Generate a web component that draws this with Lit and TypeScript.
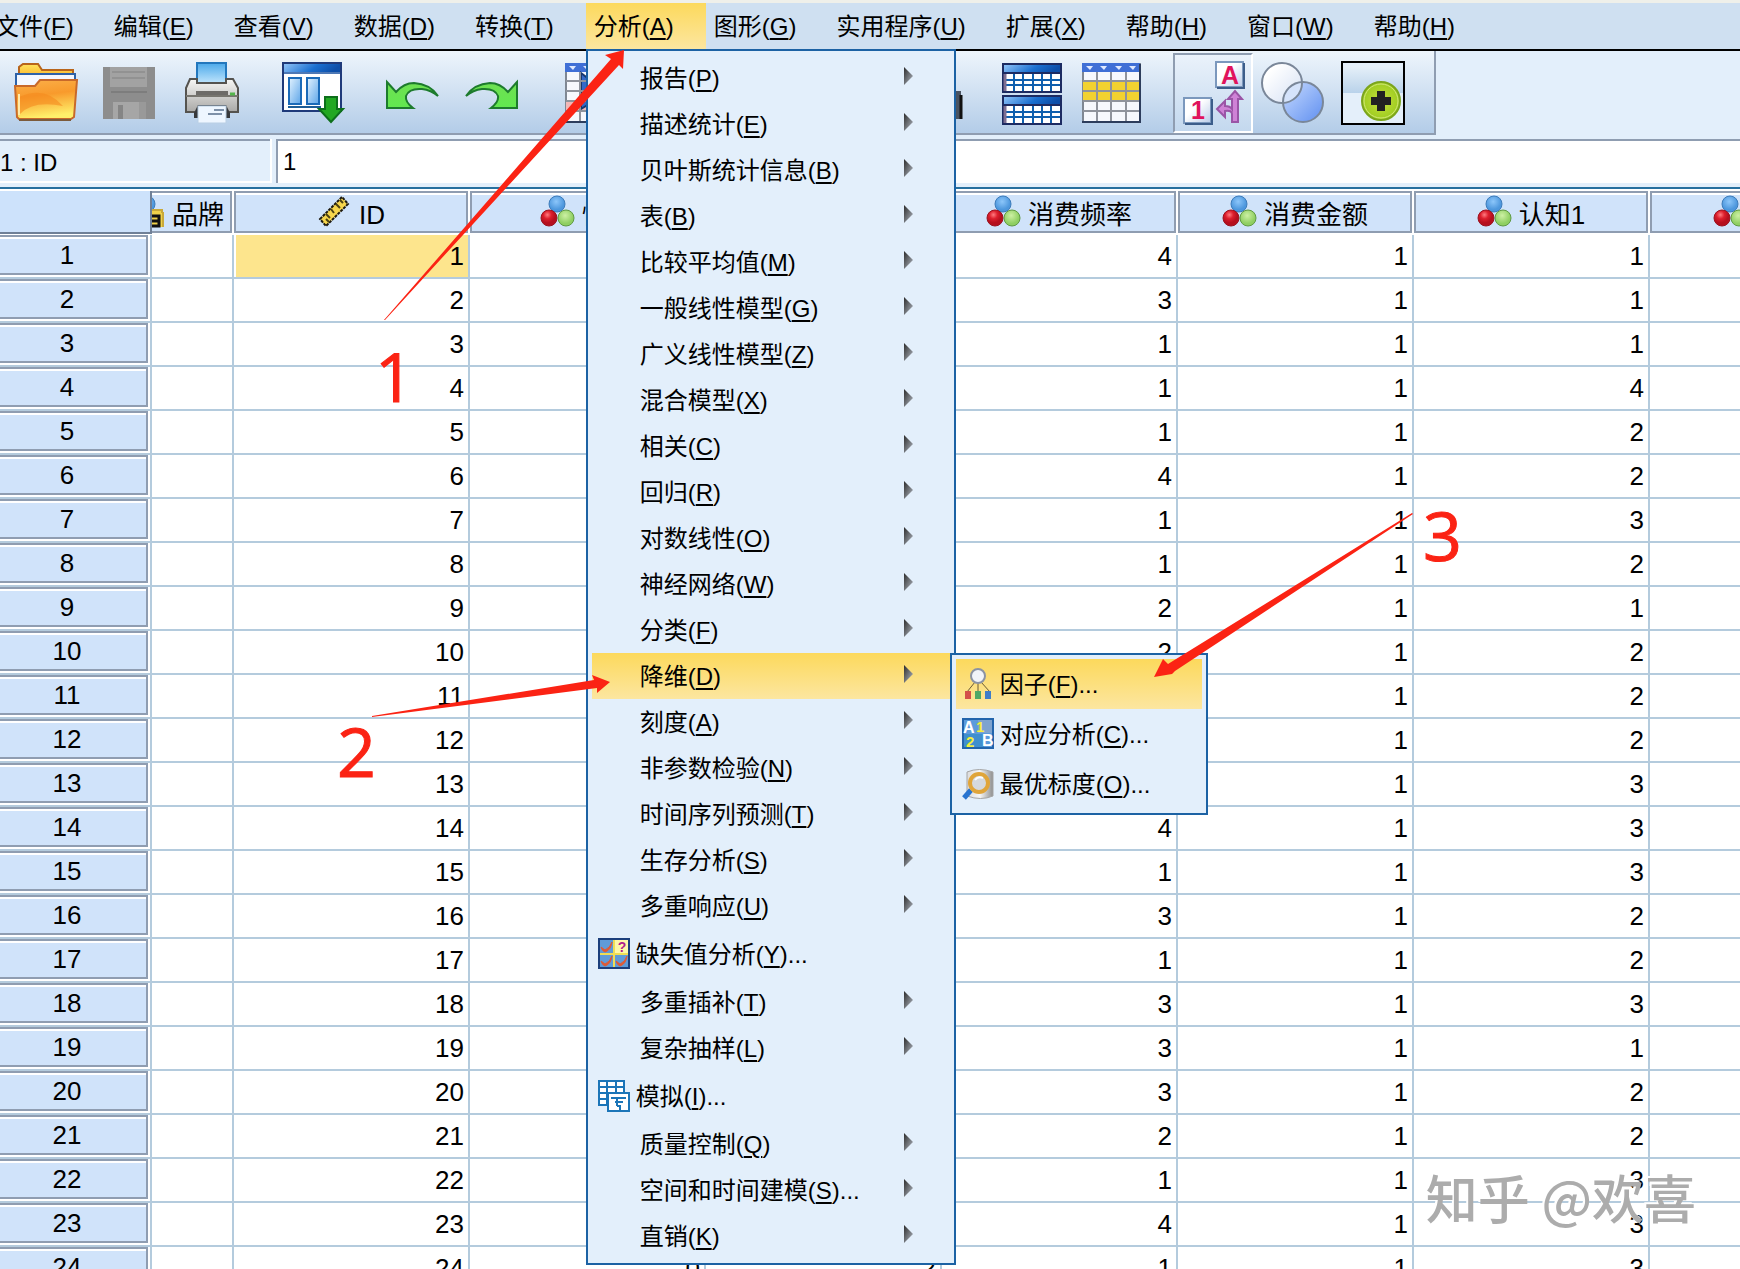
import { LitElement, html, css, svg, nothing } from "lit";
import type { TemplateResult } from "lit";
import { customElement } from "lit/decorators.js";
import { classMap } from "lit/directives/class-map.js";

type Entry = { text: string; key: string; more?: boolean; icon?: string; sub?: boolean; active?: boolean };

const MENUS: Entry[] = [
  { text: "文件", key: "F" },
  { text: "编辑", key: "E" },
  { text: "查看", key: "V" },
  { text: "数据", key: "D" },
  { text: "转换", key: "T" },
  { text: "分析", key: "A", active: true },
  { text: "图形", key: "G" },
  { text: "实用程序", key: "U" },
  { text: "扩展", key: "X" },
  { text: "帮助", key: "H" },
  { text: "窗口", key: "W" },
  { text: "帮助", key: "H" },
];

const ANALYZE: Entry[] = [
  { text: "报告", key: "P", sub: true },
  { text: "描述统计", key: "E", sub: true },
  { text: "贝叶斯统计信息", key: "B", sub: true },
  { text: "表", key: "B", sub: true },
  { text: "比较平均值", key: "M", sub: true },
  { text: "一般线性模型", key: "G", sub: true },
  { text: "广义线性模型", key: "Z", sub: true },
  { text: "混合模型", key: "X", sub: true },
  { text: "相关", key: "C", sub: true },
  { text: "回归", key: "R", sub: true },
  { text: "对数线性", key: "O", sub: true },
  { text: "神经网络", key: "W", sub: true },
  { text: "分类", key: "F", sub: true },
  { text: "降维", key: "D", sub: true, active: true },
  { text: "刻度", key: "A", sub: true },
  { text: "非参数检验", key: "N", sub: true },
  { text: "时间序列预测", key: "T", sub: true },
  { text: "生存分析", key: "S", sub: true },
  { text: "多重响应", key: "U", sub: true },
  { text: "缺失值分析", key: "Y", more: true, icon: "missing" },
  { text: "多重插补", key: "T", sub: true },
  { text: "复杂抽样", key: "L", sub: true },
  { text: "模拟", key: "I", more: true, icon: "simulate" },
  { text: "质量控制", key: "Q", sub: true },
  { text: "空间和时间建模", key: "S", more: true, sub: true },
  { text: "直销", key: "K", sub: true },
];

const REDUCTION: Entry[] = [
  { text: "因子", key: "F", more: true, icon: "factor", active: true },
  { text: "对应分析", key: "C", more: true, icon: "correspond" },
  { text: "最优标度", key: "O", more: true, icon: "scaling" },
];

const COLUMNS = [
  { name: "品牌", icon: "locked", narrow: true },
  { name: "ID", icon: "ruler" },
  { name: "性别", icon: "nominal" },
  { name: "年龄", icon: "nominal" },
  { name: "消费频率", icon: "nominal" },
  { name: "消费金额", icon: "nominal" },
  { name: "认知1", icon: "nominal" },
  { name: "认知2", icon: "nominal" },
];

const FREQUENCY = [4, 3, 1, 1, 1, 4, 1, 1, 2, 2, 3, 1, 2, 4, 1, 3, 1, 3, 3, 3, 2, 1, 4, 1];
const AWARENESS = [1, 1, 1, 4, 2, 2, 3, 2, 1, 2, 2, 2, 3, 3, 3, 2, 2, 3, 1, 2, 2, 3, 3, 3];
const ROWS = FREQUENCY.map((f, i) => ["", i + 1, 0, 2, f, 1, AWARENESS[i], ""]);

const gridLines = (x: number, y: number, w: number, h: number, cols: number, rows: number) => {
  const d: string[] = [];
  for (let c = 1; c < cols; c++) d.push(`M${x + Math.round((w * c) / cols)} ${y}v${h}`);
  for (let r = 1; r < rows; r++) d.push(`M${x} ${y + Math.round((h * r) / rows)}h${w}`);
  return d.join("");
};

const sheet = (y: number) => svg`
  <rect x="3" y=${y + 1} width="58" height="28" fill="#fff" stroke="#1c2b62" stroke-width="2"/>
  <rect x="4" y=${y + 2} width="56" height="8" fill="url(#bluebar)"/>
  <path d="M4 ${y + 10}h56" stroke="#1c2b62" stroke-width="2"/>
  <path d=${gridLines(5, y + 11, 55, 17, 6, 3)} stroke="#0e5fae" stroke-width="2"/>
  <path d="M5 ${y + 11}v17" stroke="#7d6f93" stroke-width="3"/>`;

const caseTable = (rows: TemplateResult) => svg`
  <rect x="3" y="3" width="57" height="58" fill="#f6f8fd" stroke="#7f8793" stroke-width="2"/>
  <rect x="2" y="2" width="58" height="9" fill="#3f6fd6"/>
  <path d="M6 5h7l-3 4zM20 5h7l-3 4zM35 5h7l-3 4zM49 5h7l-3 4z" fill="#dfe9ff"/>
  ${rows}
  <path d="M17 11v49M31 11v49M46 11v49M3 20h56M3 30h56M3 40h56M3 50h56" stroke="#8f939c" stroke-width="2"/>
  <path d="M60 3v58H2" fill="none" stroke="#2d3d5c" stroke-width="2"/>`;

const DEFS = svg`
  <defs>
    <linearGradient id="bluebar" x1="0" x2="1" y1="0" y2="0.2"><stop offset="0" stop-color="#8fc3f7"/><stop offset="0.6" stop-color="#1a6fd0"/><stop offset="1" stop-color="#0d4ea8"/></linearGradient>
    <linearGradient id="folder" x1="0" x2="0.2" y1="0" y2="1"><stop offset="0" stop-color="#fbb04a"/><stop offset="0.45" stop-color="#f89a2c"/><stop offset="1" stop-color="#fff06a"/></linearGradient>
    <linearGradient id="tab" x1="0" x2="0" y1="0" y2="1"><stop offset="0" stop-color="#ffe35c"/><stop offset="1" stop-color="#f9a51b"/></linearGradient>
    <linearGradient id="paper" x1="0" x2="0" y1="0" y2="1"><stop offset="0" stop-color="#4ba9ea"/><stop offset="1" stop-color="#d5efff"/></linearGradient>
    <linearGradient id="metal" x1="0" x2="0" y1="0" y2="1"><stop offset="0" stop-color="#f7f7f5"/><stop offset="1" stop-color="#a9a8a6"/></linearGradient>
    <linearGradient id="pane" x1="0" x2="1" y1="0" y2="1"><stop offset="0" stop-color="#e3f3ff"/><stop offset="1" stop-color="#5ba4e8"/></linearGradient>
    <linearGradient id="green" x1="0" x2="0" y1="0" y2="1"><stop offset="0" stop-color="#6fe052"/><stop offset="1" stop-color="#62e850"/></linearGradient>
    <linearGradient id="tile" x1="0" x2="1" y1="0" y2="1"><stop offset="0.4" stop-color="#ffffff"/><stop offset="1" stop-color="#b8cbe8"/></linearGradient>
    <linearGradient id="venn" x1="0" x2="1" y1="0" y2="1"><stop offset="0" stop-color="#c9dcff"/><stop offset="1" stop-color="#5f8ff0"/></linearGradient>
    <linearGradient id="clear" x1="0" x2="1" y1="0" y2="1"><stop offset="0.2" stop-color="#ffffff"/><stop offset="1" stop-color="#d4e0f4"/></linearGradient>
    <linearGradient id="sky" x1="0" x2="0" y1="0" y2="1"><stop offset="0" stop-color="#e6f0f9"/><stop offset="1" stop-color="#b9d2ea"/></linearGradient>
    <radialGradient id="lime"><stop offset="0.4" stop-color="#b6d832"/><stop offset="1" stop-color="#9ccb1e"/></radialGradient>
    <radialGradient id="ballb" cx="0.45" cy="0.35"><stop offset="0" stop-color="#8cc6fa"/><stop offset="1" stop-color="#4d97dd"/></radialGradient>
    <radialGradient id="ballr" cx="0.4" cy="0.3"><stop offset="0" stop-color="#ff7b80"/><stop offset="0.5" stop-color="#dd1f2d"/><stop offset="1" stop-color="#b50f1e"/></radialGradient>
    <radialGradient id="ballg" cx="0.45" cy="0.35"><stop offset="0" stop-color="#cdf0a4"/><stop offset="1" stop-color="#8fcf62"/></radialGradient>
    <linearGradient id="drum" x1="0" x2="1" y1="0" y2="0"><stop offset="0" stop-color="#dcdcdc"/><stop offset="0.5" stop-color="#f6f6f6"/><stop offset="1" stop-color="#8f8f8f"/></linearGradient>
    <linearGradient id="arrow" x1="0" x2="1" y1="0" y2="1"><stop offset="0" stop-color="#2b2b2b"/><stop offset="1" stop-color="#b5bcc6"/></linearGradient>
  </defs>`;

const UNDO = "M5 21l9 10q8-9 18-9 16 1 24 13-7-6-16-7-13-1-16 7-1 6 7 12H5z";

const TOOLS: Record<string, TemplateResult> = {
  open: svg`
    <path d="M5 14v-8l4-3h15l4 6h31v12H5z" fill="url(#tab)" stroke="#b8651b" stroke-width="2"/>
    <path d="M2 13h59v12H2z" fill="#f4f8ff" stroke="#2e62a8" stroke-width="2"/>
    <path d="M1 25h20l5-6h37l-3 37-3 2H5l-2-2z" fill="url(#folder)" stroke="#c8692a" stroke-width="2"/>
    <path d="M5 36q26-12 44 9-30-6-43 8z" fill="#f58a1e" opacity="0.6"/>
    <path d="M5 54V33" stroke="#ffe9a8" stroke-width="2"/>
    <path d="M5 59h52" stroke="#7c5b3c" stroke-width="2"/>`,
  save: svg`
    <path d="M6 6h52v52H6z" fill="#8d8d8d"/>
    <path d="M13 6h37v20H13z" fill="#a2a2a2"/>
    <path d="M15 11h33M15 17h33" stroke="#929292" stroke-width="2"/>
    <path d="M14 31h36" stroke="#7d7d7d" stroke-width="2"/>
    <path d="M16 58V41h26v17z" fill="#a6a6a6"/><path d="M21 44h5v14h-5z" fill="#858585"/><path d="M42 41h7v17h-7z" fill="#999"/>`,
  print: svg`
    <path d="M14 26v-7h36v7" fill="#2f3740"/>
    <path d="M17 2h29v24H17z" fill="url(#paper)" stroke="#2277bd" stroke-width="2"/>
    <path d="M10 18h7v4h29v-4h7l5 9v24H6V27z" fill="url(#metal)" stroke="#55534f" stroke-width="2"/>
    <path d="M6 35h52" stroke="#77756f" stroke-width="2"/><path d="M16 32h32" stroke="#6d6b68" stroke-width="4"/>
    <path d="M50 33h5" stroke="#55b54c" stroke-width="3"/>
    <path d="M14 52l4-8h28l4 8v5H14z" fill="#37393c"/>
    <path d="M18 45h28v17H18z" fill="#eef6ff" stroke="#b9cfe4"/><path d="M28 53h14M34 49h10" stroke="#7d90a8" stroke-width="2"/>`,
  recall: svg`
    <rect x="2" y="2" width="58" height="48" fill="#fff" stroke="#1f3a7a" stroke-width="2"/>
    <rect x="3" y="3" width="56" height="9" fill="url(#bluebar)"/><path d="M3 12h56" stroke="#4d78b5" stroke-width="2"/>
    <rect x="8" y="17" width="12" height="26" fill="url(#pane)" stroke="#1a6ab8" stroke-width="2"/>
    <rect x="26" y="17" width="12" height="26" fill="url(#pane)" stroke="#1a6ab8" stroke-width="2"/>
    <path d="M7 46h33" stroke="#1c5d97" stroke-width="2"/>
    <path d="M44 36h12v12h6L50 61 38 48h6z" fill="#22a822" stroke="#0d6f1b" stroke-width="2"/>`,
  undo: svg`<path d=${UNDO} fill="url(#green)" stroke="#1d7b2d" stroke-width="2"/>`,
  redo: svg`<path d=${UNDO} transform="matrix(-1 0 0 1 60 0)" fill="url(#green)" stroke="#1d7b2d" stroke-width="2"/>`,
  goto: caseTable(svg`<path d="M3 41h56v9H3z" fill="#f2b7b7"/><path d="M18 12l26 20-26 16z" fill="#3468c8" stroke="#17376e" stroke-width="2"/>`),
  find: svg`<path d="M6 30h56v28H6z" fill="#4a5361"/><path d="M62 34v24" stroke="#111" stroke-width="3"/>`,
  split: svg`${sheet(2)}${sheet(34)}`,
  select: caseTable(svg`<path d="M3 21h56v19H3z" fill="#f2d230"/>`),
  labels: svg`
    <rect x="35" y="1" width="27" height="25" fill="url(#tile)" stroke="#7b98bd" stroke-width="2"/><path d="M36 27h27V2" fill="none" stroke="#3c5d8a" stroke-width="2"/>
    <text x="49" y="23" text-anchor="middle" class="glyph">A</text>
    <rect x="3" y="37" width="27" height="25" fill="url(#tile)" stroke="#7b98bd" stroke-width="2"/><path d="M4 63h27V38" fill="none" stroke="#3c5d8a" stroke-width="2"/>
    <text x="17" y="58" text-anchor="middle" class="glyph">1</text>
    <path d="M51 61V53q0-4-7-3v6l-8-8 8-8v5q5 0 7 3V38h-4l7-8 7 8h-4v23z" fill="#cf82d6" stroke="#9a55a6" stroke-width="2"/>`,
  venn: svg`
    <circle cx="21" cy="22" r="20" fill="url(#clear)"/><circle cx="42" cy="41" r="20" fill="url(#venn)"/>
    <path d="M22 42A20 20 0 0 1 41 21A20 20 0 0 1 22 42z" fill="#d5e3fb"/>
    <g fill="none" stroke="#7a8799" stroke-width="2"><circle cx="21" cy="22" r="20"/><circle cx="42" cy="41" r="20"/></g>`,
  custom: svg`
    <rect x="1" y="1" width="62" height="62" fill="#e4effa" stroke="#000" stroke-width="2"/>
    <path d="M2 5h60v27H2z" fill="url(#sky)"/>
    <circle cx="40" cy="40" r="19" fill="url(#lime)" stroke="#7ca51c" stroke-width="2"/><circle cx="40" cy="40" r="17" fill="none" stroke="#d3e87a" stroke-width="1"/>
    <path d="M36 30h8v6h6v8h-6v6h-8v-6h-6v-8h6z" fill="#222"/>`,
};

const TOOL_GROUPS: { ids: [string, string][]; gap: string }[] = [
  { ids: [["open", "打开"], ["save", "保存"], ["print", "打印"]], gap: "g3" },
  { ids: [["recall", "重新调用对话框"]], gap: "" },
  { ids: [["undo", "撤消"], ["redo", "重做"]], gap: "" },
  { ids: [["goto", "转到个案"], ["goto", "转到变量"], ["select", "变量"], ["select", "描述"], ["find", "查找"]], gap: "g4" },
  { ids: [["split", "拆分文件"], ["select", "选择个案"]], gap: "" },
  { ids: [["labels", "值标签"], ["venn", "使用变量集"], ["custom", "定制工具栏"]], gap: "" },
];

const BALLS = svg`
  <g stroke-width="1">
    <circle cx="17" cy="8" r="8" fill="url(#ballb)" stroke="#3d7cba"/>
    <circle cx="9" cy="22" r="8" fill="url(#ballr)" stroke="#9b1320"/>
    <circle cx="26" cy="22" r="8" fill="url(#ballg)" stroke="#5f9a43"/>
  </g>`;

const SMALL: Record<string, TemplateResult> = {
  nominal: BALLS,
  locked: svg`<circle cx="17" cy="8" r="8" fill="url(#ballb)" stroke="#3d7cba"/><rect x="17" y="14" width="16" height="17" fill="#f0d24a"/><path d="M18 14h14v3M33 16v15" fill="none" stroke="#c9a93a" stroke-width="2"/><path d="M21 20h8v10h-9v-5h9" fill="none" stroke="#111" stroke-width="3"/>`,
  ruler: svg`<path d="M3 23L25 1l6 7L9 30z" fill="#f7d64c" stroke="#1d1a10" stroke-width="2" stroke-dasharray="3 1"/><path d="M9 18l4 4M14 13l3 4M19 8l4 4M23 4l3 3M12 26l-3-3" stroke="#4d4212" stroke-width="2"/>`,
  missing: svg`
    <rect x="1" y="1" width="30" height="29" fill="#5f9bd8" stroke="#1c3f7c" stroke-width="2"/>
    <path d="M17 2h13v14H17z" fill="#fdf7a8"/><path d="M2 16h28M16 2v27" stroke="#f0dd55" stroke-width="2"/>
    <path d="M3 9l4 3q5-2 7-8-1 8-7 10-3-1-4-5zM3 23l4 3q5-2 7-8-1 8-7 10-3-1-4-5zM18 23l4 3q5-2 7-8-1 8-7 10-3-1-4-5z" fill="#e05a35" stroke="#e05a35"/>
    <text x="24" y="14" text-anchor="middle" class="mark">?</text>`,
  simulate: svg`
    <path d="M1 1h25v24H1z" fill="#fff" stroke="#1b75b8" stroke-width="2"/>
    <path d="M9 1v24M18 1v24M1 7h25M1 13h25M1 19h25" stroke="#1b75b8" stroke-width="2"/>
    <path d="M10 13h21v18H10z" fill="#fff" stroke="#1b75b8" stroke-width="2"/>
    <path d="M13 18h15M17 22h8M19 26h3v4M19 18v8" stroke="#1b75b8" stroke-width="2" fill="none"/>`,
  factor: svg`
    <path d="M16 14v10M13 14L5 24M19 14l9 10" stroke="#6b5a34" stroke-width="1" fill="none"/>
    <circle cx="16" cy="8" r="7" fill="#f1f4f9" stroke="#8b93a3" stroke-width="2"/>
    <path d="M3 23h6v8H3z" fill="#d3504a"/><path d="M13 23h6v8h-6z" fill="#4fa866"/><path d="M23 23h6v8h-6z" fill="#3e7dc9"/>`,
  correspond: svg`
    <rect x="1" y="1" width="30" height="29" fill="#5b9bdc" stroke="#2264ac" stroke-width="2"/><path d="M16 2h14v13H16z" fill="#7ea3cf"/><path d="M2 16h20v13H2z" fill="#3f8fce"/>
    <text x="1" y="15" class="lt">A</text><text x="14" y="14" class="yw">1</text><text x="4" y="29" class="yw">2</text><text x="20" y="28" class="lt">B</text>`,
  scaling: svg`
    <path d="M5 4q12-5 26 0v24q-12 5-26 0z" fill="url(#drum)" stroke="#a5a5a5"/>
    <path d="M9 22l-7 8" stroke="#2874d0" stroke-width="5"/>
    <circle cx="17" cy="15" r="9" fill="#d5d9de" stroke="#e0a53a" stroke-width="4"/><path d="M13 12q3-4 8-2" stroke="#fff" stroke-width="2" fill="none"/>`,
};

const small = (id: string, width = 34) =>
  html`<svg class="small" viewBox="0 0 ${width} 32" width=${width} height="32" aria-hidden="true">${SMALL[id]}</svg>`;
const label = (e: Entry) => html`<span>${e.text}(<u>${e.key}</u>)${e.more ? "..." : ""}</span>`;

@customElement("app-root")
export class AppRoot extends LitElement {
  static styles = css`
    :host {
      display: block;
      font-family: "Liberation Sans", "Noto Sans CJK SC", sans-serif;
      font-size: 24px;
      line-height: 32px;
      color: #000;
    }
    * { box-sizing: border-box; }
    button, input { font: inherit; color: inherit; border: 0; margin: 0; padding: 0; background: none; border-radius: 0; }
    .defs { position: absolute; width: 0; height: 0; }
    .shell { position: relative; display: flex; flex-direction: column; height: 100vh; overflow: hidden; background: #e3effb; }

    .menubar { display: flex; border-top: 3px solid #eff0ea; border-bottom: 2px solid #000; background: #cfe0f1; padding: 0; }
    .menubar ul, .menu { list-style: none; margin: 0; padding: 0; }
    .bar { display: flex; }
    .bar > li { position: relative; flex: none; }
    .bar > li:first-child { margin-left: -13px; }
    .top { display: block; height: 46px; padding: 2px 32px 0 8px; white-space: nowrap; }
    .hot { background: linear-gradient(#fcd95c, #fce6a0); }
    u { text-underline-offset: 3px; text-decoration-thickness: 2px; }

    .bar .menu { position: absolute; z-index: 2; background: #e3effb; border: 2px solid #1c62a4; padding: 4px; }
    .drop { left: 0; top: 46px; width: 370px; }
    .bar .drop { padding-right: 0; }
    .menu li { position: relative; }
    .item { display: flex; align-items: center; width: 100%; height: 46px; padding-left: 48px; padding-right: 40px; text-align: left; white-space: nowrap; }
    .item span { flex: 1; padding-top: 2px; }
    .item.pic { height: 50px; padding-left: 6px; gap: 6px; }
    .side .item { padding-right: 0; }
    .tri { width: 10px; height: 20px; flex: none; margin-bottom: 4px; }
    .side { left: 358px; top: 0; width: 258px; }
    .small { flex: none; overflow: visible; }
    .glyph { font: bold 25px "Liberation Sans", sans-serif; fill: #e0135c; }
    .mark { font: bold 14px "Liberation Sans", sans-serif; fill: #b01e8c; }
    .lt { font: bold 16px "Liberation Sans", sans-serif; fill: #fff; }
    .yw { font: bold 15px "Liberation Sans", sans-serif; fill: #f3ee3d; }

    .tools { display: flex; padding-bottom: 4px; }
    .toolbar { display: flex; flex: none; gap: 21px; padding: 2px 21px 0 6px; height: 84px; border-right: 2px solid #8f9db1; border-bottom: 2px solid #8f9db1; background: linear-gradient(#eef5fc, #b3cce8); }
    .group { display: flex; }
    .g3 { gap: 3px; }
    .g4 { gap: 4px; }
    .tool { width: 80px; height: 80px; display: grid; place-items: center; }
    .tool svg { width: 64px; height: 64px; overflow: visible; }
    .pressed { border: 2px solid #fff; border-top-color: #8f9db1; border-left-color: #8f9db1; background: linear-gradient(#eaf2fb, #c3d8ee); }

    .cellbar { display: flex; gap: 6px; padding-bottom: 4px; border-bottom: 2px solid #27709f; }
    .ref { width: 270px; height: 44px; padding-top: 6px; border-top: 2px solid #8f9db1; border-bottom: 2px solid #fff; box-shadow: 2px 0 #fff; }
    .value { flex: 1; min-width: 0; height: 44px; padding: 0 5px; background: #fff; border-top: 2px solid #8f9db1; border-left: 2px solid #8f9db1; }

    .sheet { flex: 1; min-height: 0; overflow: hidden; background: #fff; padding-top: 2px; font-size: 26px; }
    table { table-layout: fixed; border-collapse: separate; border-spacing: 0; width: 1886px; }
    .chead { width: 152px; }
    .cslim { width: 82px; }
    th, td { padding: 0; font-weight: 400; white-space: nowrap; }
    th { padding: 0 2px 2px 0; }
    td { height: 44px; padding-right: 4px; text-align: right; border-right: 2px solid #b4cbdd; border-bottom: 2px solid #b4cbdd; }
    td.picked { background: #fde58d; box-shadow: inset 2px 0 #fff; }
    .box { display: flex; align-items: center; justify-content: center; gap: 8px; height: 42px; overflow: hidden; border: 2px solid #8f9db1; background: #d0e3fa; box-shadow: inset 0 2px #fff; }
    .box span { padding-top: 5px; }
    .box.slim { border-left: 0; justify-content: flex-end; padding-right: 6px; }
    .corner { padding: 0 0 1px; }
    .blank { height: 43px; border-right: 2px solid #6f8097; border-bottom: 2px solid #6f8097; background: #cde2fb; }
    .rowhead { border-right: 2px solid #b4cbdd; border-bottom: 2px solid #b4cbdd; }
    .rowhead .box { height: 40px; border-left: 0; padding-right: 12px; }

    .notes { position: absolute; z-index: 3; left: 0; top: 0; width: 100%; height: 100%; pointer-events: none; fill: #fb2314; }
    .num { font: 68px "Open Sans", sans-serif; stroke: #fb2314; stroke-width: 1px; }
    .mark-by { position: absolute; right: 44px; bottom: 34px; font-size: 52px; line-height: 76px; font-weight: 500; font-family: "Noto Sans CJK SC", sans-serif; color: #acacac; text-shadow: -2px -2px #fff; white-space: nowrap; }
  `;

  private item(e: Entry): TemplateResult {
    return html`<li role="none">
      <button role="menuitem" class=${classMap({ item: true, pic: !!e.icon, hot: !!e.active })}>
        ${e.icon ? small(e.icon, 32) : nothing}${label(e)}
        ${e.sub ? html`<svg class="tri" viewBox="0 0 10 20" aria-hidden="true"><path d="M0 1l9 9L0 19z" fill="url(#arrow)"/></svg>` : nothing}
      </button>
      ${e.sub && e.active ? html`<ul class="menu side" role="menu">${REDUCTION.map((r) => this.item(r))}</ul>` : nothing}
    </li>`;
  }

  render() {
    return html`
      <svg class="defs" aria-hidden="true">${DEFS}</svg>
      <div class="shell">
        <nav class="menubar">
          <ul class="bar" role="menubar">
            ${MENUS.map((m) => html`<li role="none">
              <button role="menuitem" class=${classMap({ top: true, hot: !!m.active })}>${label(m)}</button>
              ${m.active ? html`<ul class="menu drop" role="menu">${ANALYZE.map((e) => this.item(e))}</ul>` : nothing}
            </li>`)}
          </ul>
        </nav>
        <div class="tools">
          <div class="toolbar" role="toolbar">
            ${TOOL_GROUPS.map((g) => html`<div class="group ${g.gap}">
              ${g.ids.map(([id, name]) => html`<button class=${classMap({ tool: true, pressed: id === "labels" })} aria-label=${name}>
                <svg viewBox="0 0 64 64" aria-hidden="true">${TOOLS[id]}</svg>
              </button>`)}
            </div>`)}
          </div>
        </div>
        <div class="cellbar">
          <label class="ref" for="cell">1 : ID</label>
          <input class="value" id="cell" value="1" />
        </div>
        <main class="sheet">
          <table>
            <colgroup>
              <col class="chead" />
              ${COLUMNS.map((c) => html`<col class=${c.narrow ? "cslim" : ""} />`)}
            </colgroup>
            <thead>
              <tr>
                <th class="corner"><div class="blank"></div></th>
                ${COLUMNS.map((c) => html`<th scope="col"><div class=${classMap({ box: true, slim: !!c.narrow })}>${small(c.icon)}<span>${c.name}</span></div></th>`)}
              </tr>
            </thead>
            <tbody>
              ${ROWS.map((row, r) => html`<tr>
                <th scope="row" class="rowhead"><div class="box">${r + 1}</div></th>
                ${row.map((v, c) => html`<td class=${r === 0 && c === 1 ? "picked" : ""}>${v}</td>`)}
              </tr>`)}
            </tbody>
          </table>
        </main>
        <div class="mark-by">知乎 @欢喜</div>
        <svg class="notes">
          <path d="M384 320L611 59L605 55L624 50L623 69L619 65L385 320z"/>
          <path d="M372 716L594 680L592 675L610 682L597 693L597 688L372 717z"/>
          <path d="M1412 513L1168 664L1163 659L1154 677L1172 674L1175 671L1413 514z"/>
          <text class="num" x="375" y="402">1</text>
          <text class="num" x="337" y="777">2</text>
          <text class="num" x="1423" y="561">3</text>
        </svg>
      </div>
    `;
  }
}
